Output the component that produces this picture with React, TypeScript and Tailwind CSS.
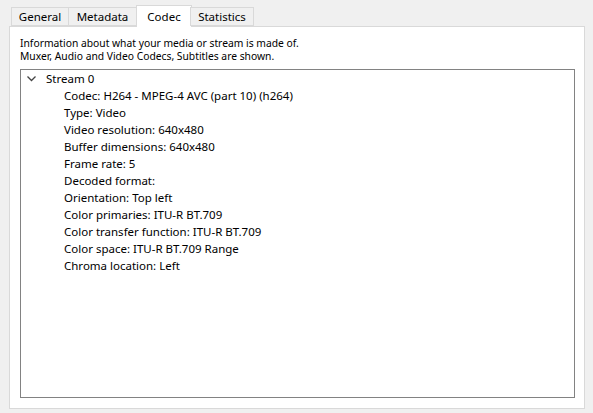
const tabs = [
  { label: "General", w: "w-[58px]" },
  { label: "Metadata", w: "w-[69px]" },
  { label: "Codec", w: "w-[56px]", active: true },
  { label: "Statistics", w: "w-[64px]" },
];

const details = [
  "Codec: H264 - MPEG-4 AVC (part 10) (h264)",
  "Type: Video",
  "Video resolution: 640x480",
  "Buffer dimensions: 640x480",
  "Frame rate: 5",
  "Decoded format:",
  "Orientation: Top left",
  "Color primaries: ITU-R BT.709",
  "Color transfer function: ITU-R BT.709",
  "Color space: ITU-R BT.709 Range",
  "Chroma location: Left",
];

export default function App() {
  return (
    <div className="w-[593px] h-[413px] bg-[#f0f0f0] text-black text-[11.5px] font-['Noto_Sans',sans-serif] overflow-hidden">
      {/* tab strip */}
      <div className="flex items-end h-[27px] pl-[11px] relative z-10">
        {tabs.map((t) =>
          t.active ? (
            <div
              key={t.label}
              className={`${t.w} h-[22px] -mx-[1px] bg-white border border-b-0 border-[#d9d9d9] flex items-start justify-center pt-[2px]`}
            >
              {t.label}
            </div>
          ) : (
            <div
              key={t.label}
              className={`${t.w} h-[19px] mb-[1px] bg-[#f0f0f0] border border-[#d9d9d9] -ml-[1px] first:ml-0 flex items-center justify-center`}
            >
              {t.label}
            </div>
          )
        )}
      </div>

      {/* pane */}
      <div className="ml-[9px] -mt-[1px] w-[576px] h-[383px] bg-white border border-[#d9d9d9] flex flex-col pl-[10px] pt-[10px]">
        <p className="text-[10.3px] leading-[13px]">
          Information about what your media or stream is made of.
          <br />
          Muxer, Audio and Video Codecs, Subtitles are shown.
        </p>

        <div className="mt-[6px] w-[555px] h-[329px] border border-[#828282] bg-white">
          <div className="flex items-center h-[17px] pl-[6px]">
            <svg width="9" height="6" viewBox="0 0 9 6" className="mr-[10px]">
              <polyline points="0.5,0.5 4.5,4.5 8.5,0.5" fill="none" stroke="#444" strokeWidth="1.3" />
            </svg>
            <span>Stream 0</span>
          </div>
          {details.map((d) => (
            <div key={d} className="h-[17px] flex items-center pl-[43px]">
              {d}
            </div>
          ))}
        </div>
      </div>
    </div>
  );
}
